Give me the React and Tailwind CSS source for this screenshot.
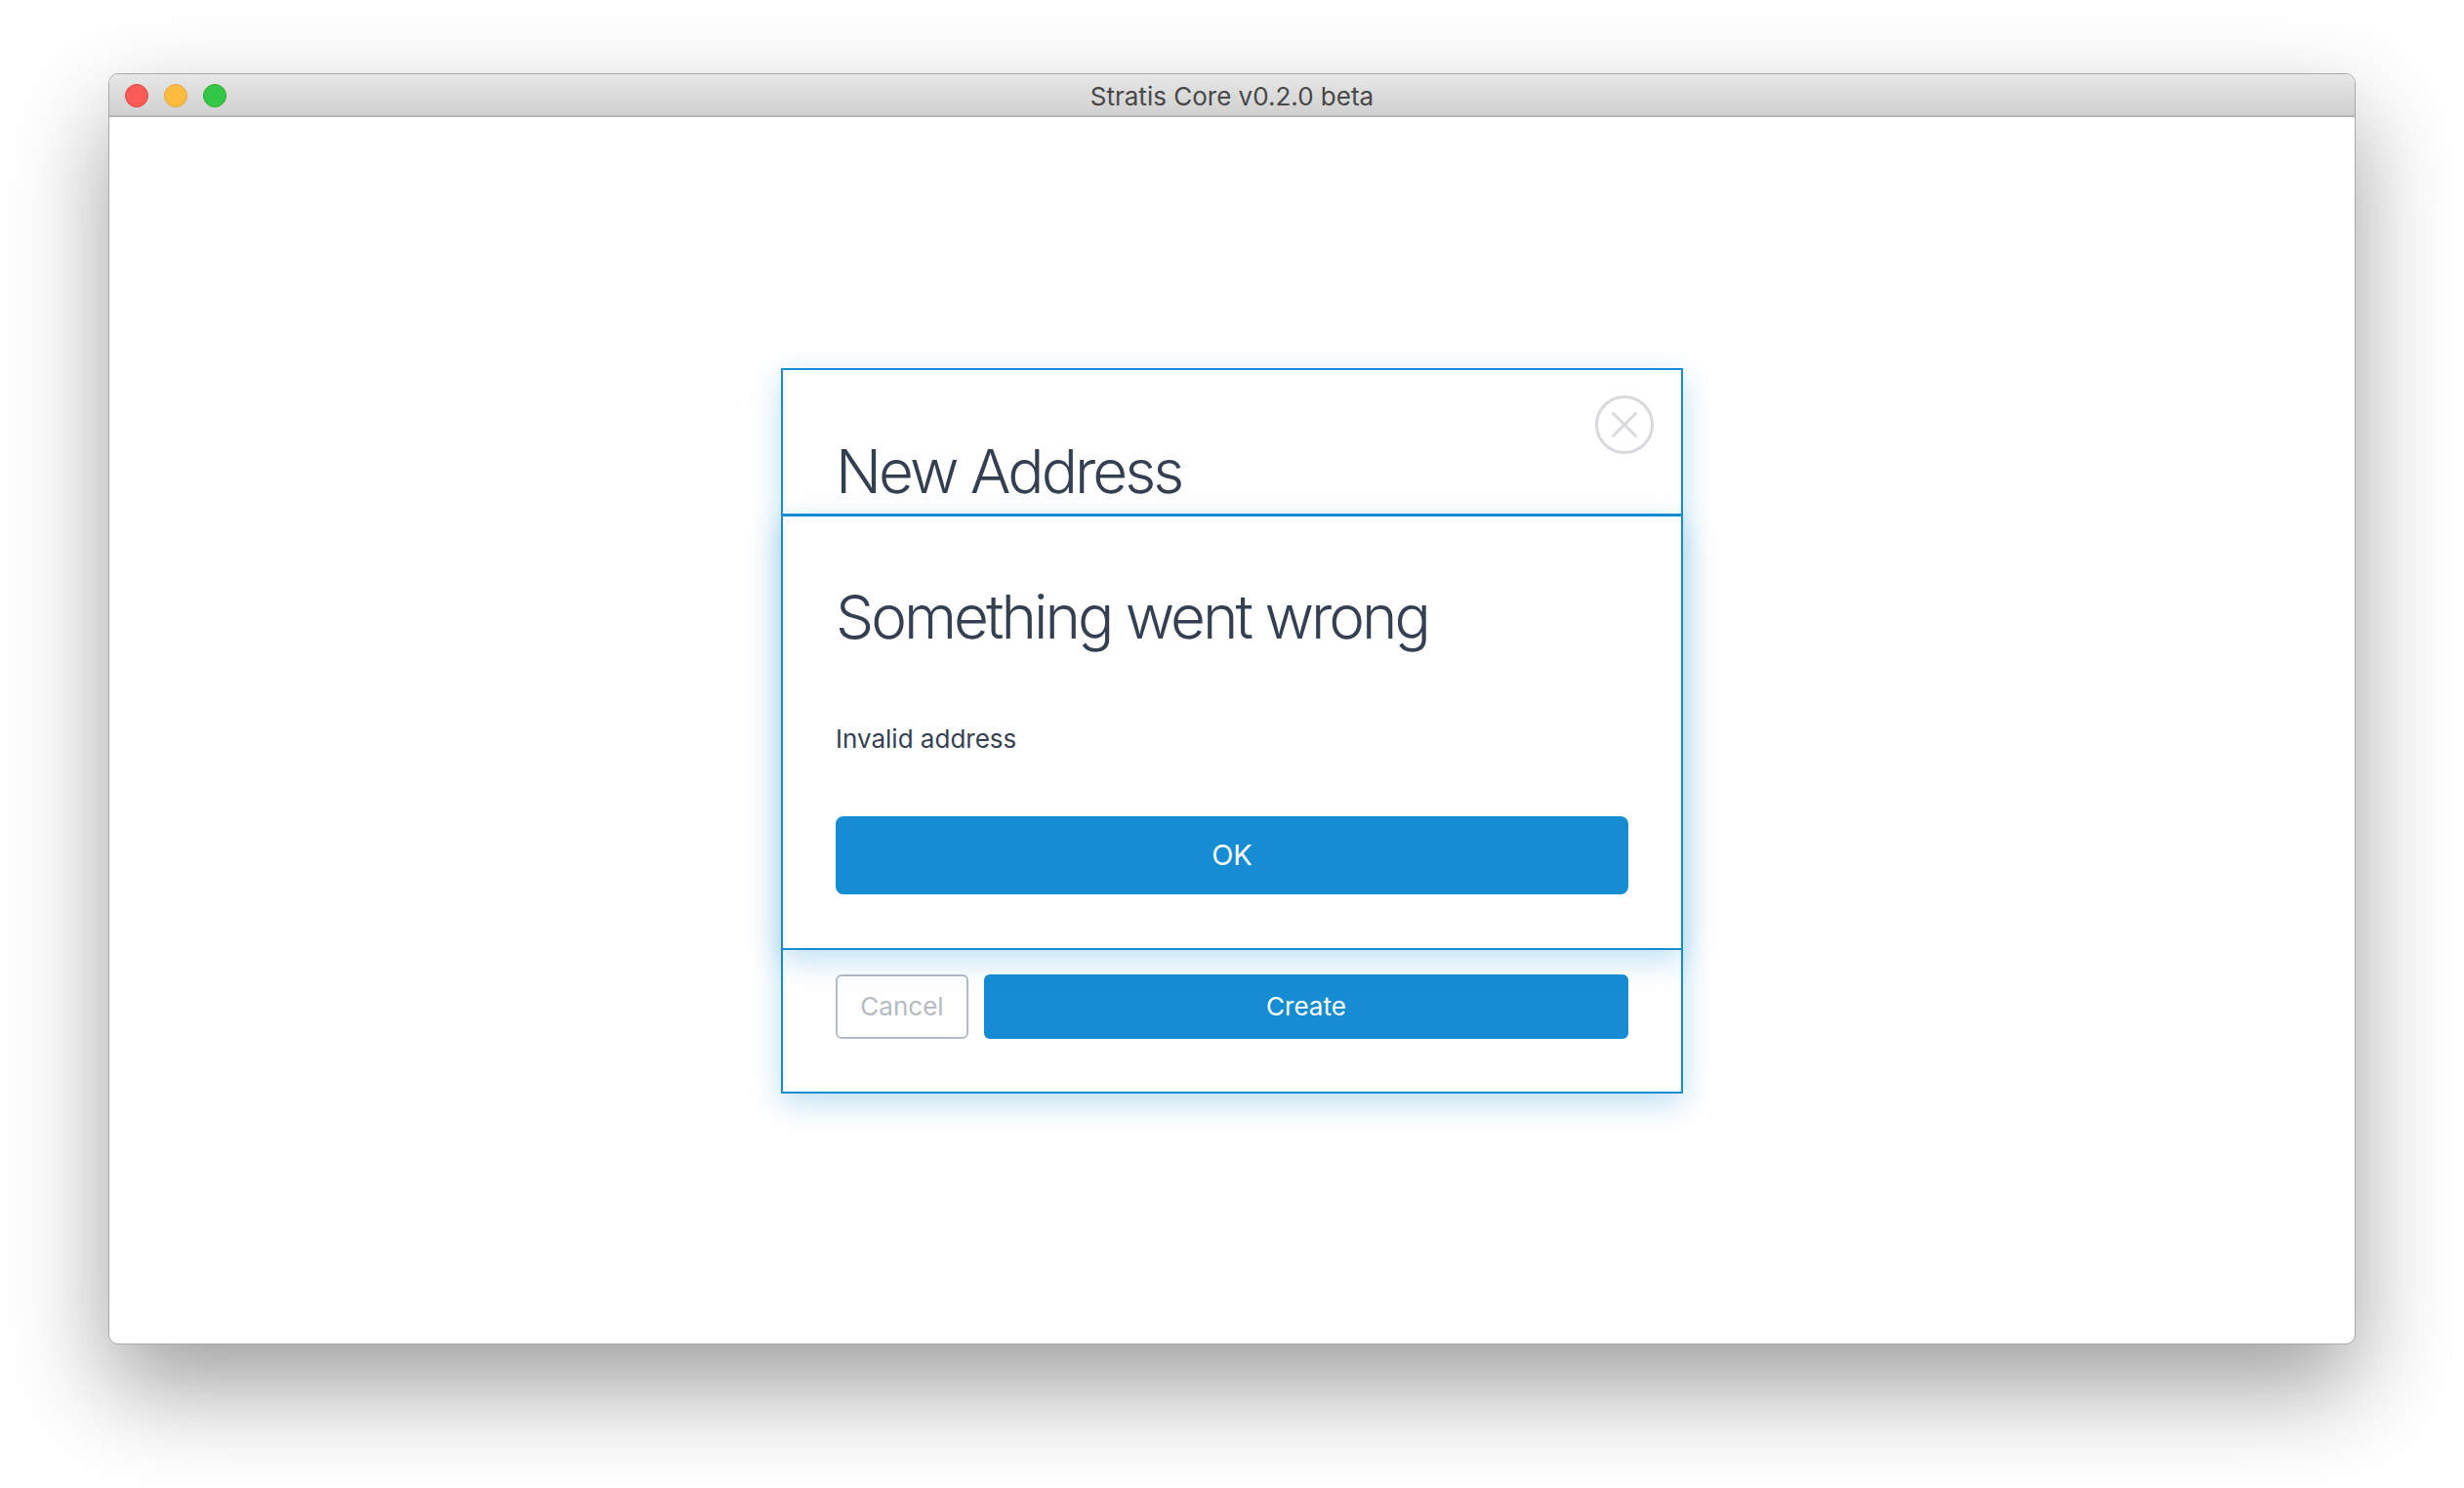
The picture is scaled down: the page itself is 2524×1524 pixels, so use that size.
import { X } from "lucide-react";

const inter = "font-['Inter','Liberation_Sans',sans-serif]";

function Lights() {
  return (
    <div className="flex items-center gap-4 absolute left-4 top-[10px]">
      <span className="w-6 h-6 rounded-full bg-[#fc5b57] border border-[#e0443e]" />
      <span className="w-6 h-6 rounded-full bg-[#fdbc40] border border-[#e1a73e]" />
      <span className="w-6 h-6 rounded-full bg-[#33c748] border border-[#2dac2f]" />
    </div>
  );
}

export default function App() {
  return (
    <div className={`w-[2524px] h-[1524px] bg-white pl-[111px] pt-[75px] overflow-hidden ${inter}`}>
      {/* mac window */}
      <div className="w-[2302px] h-[1302px] flex flex-col rounded-[10px] bg-white shadow-[0_44px_100px_0_rgba(0,0,0,0.38)] border border-[#a9a9a9] overflow-hidden">
        <div className="relative h-11 shrink-0 flex items-center justify-center pt-[3px] bg-gradient-to-b from-[#e7e7e7] to-[#d0d0d0] border-b-2 border-[#b4b4b4]">
          <Lights />
          <span className="text-[26px] leading-none text-[#484848]">Stratis Core v0.2.0 beta</span>
        </div>

        <div className="flex-1 flex items-center justify-center">
          {/* new address modal */}
          <div className="relative w-[924px] h-[743px] flex flex-col bg-white border-2 border-[#168cd2] shadow-[0_10px_30px_rgba(22,140,210,0.28)]">
            <div className="relative h-[149px] shrink-0 flex items-end px-[54px] border-b-2 border-[#168cd2]">
              <h1 className="text-[62px] leading-[86px] font-light text-[#353f52] tracking-[-3px]">New Address</h1>
              <button className="absolute right-[28px] top-[26px] w-[60px] h-[60px] rounded-full border-[3px] border-[#d7d9dd] flex items-center justify-center">
                <X size={46} strokeWidth={1.5} className="text-[#d7d9dd]" />
              </button>
            </div>

            <div className="flex-1" />

            <div className="flex gap-4 px-[54px] pb-[54px]">
              <button className="w-[136px] h-[66px] rounded-[6px] border-2 border-[#b5bac3] text-[26px] text-[#b5bac3]">Cancel</button>
              <button className="flex-1 h-[66px] rounded-[6px] bg-[#168cd2] text-[26px] text-white">Create</button>
            </div>

            {/* error dialog on top */}
            <div className="absolute left-[-2px] right-[-2px] top-[148px] h-[446px] bg-white border-2 border-[#168cd2] shadow-[0_10px_30px_rgba(22,140,210,0.28)] px-[54px] flex flex-col">
              <h2 className="mt-[57px] text-[62px] leading-[92px] font-light text-[#353f52] tracking-[-3px]">Something went wrong</h2>
              <p className="mt-[61px] text-[26px] leading-[36px] text-[#353f52]">Invalid address</p>
              <button className="mt-[61px] h-[80px] rounded-[8px] bg-[#168cd2] text-[29px] text-white">OK</button>
            </div>
          </div>
        </div>
      </div>
    </div>
  );
}
